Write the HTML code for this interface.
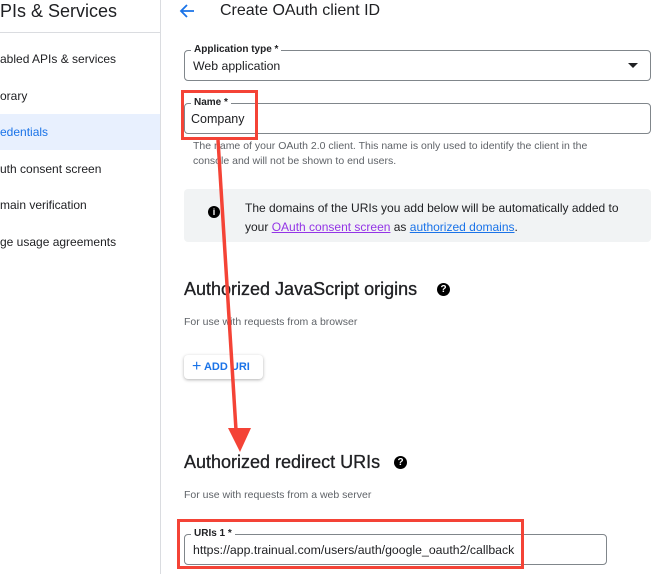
<!DOCTYPE html>
<html><head><style>
*{margin:0;padding:0;box-sizing:border-box}
body{width:666px;height:574px;background:#fff;font-family:"Liberation Sans",Arial,sans-serif;color:#202124;position:relative;overflow:hidden}
.a{position:absolute;white-space:nowrap}
.side{position:absolute;left:0;top:0;width:161px;height:574px;border-right:1px solid #dadce0}
.field{position:absolute;border:1px solid #80868b;border-radius:4px;background:#fff}
.lab{position:absolute;top:-7px;left:6px;background:#fff;padding:0 3px;font-size:10px;font-weight:bold;color:#202124}
.red{position:absolute;border:3px solid #f44336}
</style></head><body>
<div class="side">
<div class="a" style="left:0;top:1px;font-size:18px">PIs &amp; Services</div>
<div style="position:absolute;left:0;top:32px;width:161px;border-top:1px solid #dadce0"></div>
<div class="a" style="left:0;top:52px;font-size:12px">abled APIs &amp; services</div>
<div class="a" style="left:0;top:89px;font-size:12px">orary</div>
<div style="position:absolute;left:0;top:114px;width:160px;height:36px;background:#e8f0fe"></div>
<div class="a" style="left:0;top:125px;font-size:12px;color:#1a73e8">edentials</div>
<div class="a" style="left:0;top:162px;font-size:12px">uth consent screen</div>
<div class="a" style="left:0;top:198px;font-size:12px">main verification</div>
<div class="a" style="left:0;top:235px;font-size:12px">ge usage agreements</div>
</div>
<svg class="a" style="left:178px;top:3px" width="18" height="16" viewBox="0 0 18 16"><path d="M16 8H3M9 2L3 8l6 6" stroke="#1a73e8" stroke-width="1.8" fill="none"/></svg>
<div class="a" style="left:220px;top:2px;font-size:16px">Create OAuth client ID</div>
<div class="field" style="left:184px;top:50px;width:467px;height:31px"><div class="lab">Application type *</div>
<div class="a" style="left:8px;top:8px;font-size:12.3px">Web application</div>
<div class="a" style="right:12px;top:12px;width:0;height:0;border-left:5px solid transparent;border-right:5px solid transparent;border-top:5px solid #202124"></div></div>
<div class="field" style="left:184px;top:103px;width:467px;height:31px"><div class="lab">Name *</div>
<div class="a" style="left:6px;top:8px;font-size:12.5px">Company</div></div>
<div class="a" style="left:193px;top:139px;font-size:10.5px;color:#5f6368;line-height:15px">The name of your OAuth 2.0 client. This name is only used to identify the client in the<br>console and will not be shown to end users.</div>
<div style="position:absolute;left:184px;top:189px;width:467px;height:53px;background:#f1f3f4;border-radius:4px"></div>
<div class="a" style="left:208px;top:206px;width:12px;height:12px;border-radius:50%;background:#000;color:#fff;font-size:9px;font-weight:bold;text-align:center;line-height:12px">i</div>
<div class="a" style="left:245px;top:199px;font-size:12px;line-height:19px">The domains of the URIs you add below will be automatically added to<br>your <span style="color:#9334e6;text-decoration:underline">OAuth consent screen</span> as <span style="color:#1a73e8;text-decoration:underline">authorized domains</span>.</div>
<div class="a" style="left:184px;top:279px;font-size:18px;-webkit-text-stroke:0.3px #202124">Authorized JavaScript origins</div>
<div class="a" style="left:437px;top:283px;width:13px;height:13px;border-radius:50%;background:#000;color:#fff;font-size:10px;font-weight:bold;text-align:center;line-height:13px">?</div>
<div class="a" style="left:184px;top:316px;font-size:10.5px;color:#5f6368">For use with requests from a browser</div>
<div class="a" style="left:184px;top:355px;width:79px;height:24px;border-radius:4px;box-shadow:0 1px 3px rgba(0,0,0,.3);background:#fff;color:#1a73e8;font-size:11px;font-weight:bold;line-height:24px;padding-left:8px"><span style="font-size:16px;font-weight:normal;vertical-align:-1px">+</span> ADD URI</div>
<div class="a" style="left:184px;top:452px;font-size:18px;-webkit-text-stroke:0.3px #202124">Authorized redirect URIs</div>
<div class="a" style="left:394px;top:456px;width:13px;height:13px;border-radius:50%;background:#000;color:#fff;font-size:10px;font-weight:bold;text-align:center;line-height:13px">?</div>
<div class="a" style="left:184px;top:489px;font-size:10.5px;color:#5f6368">For use with requests from a web server</div>
<div class="field" style="left:184px;top:534px;width:423px;height:31px"><div class="lab">URIs 1 *</div>
<div class="a" style="left:8px;top:8px;font-size:12.3px">https://app.trainual.com/users/auth/google_oauth2/callback</div></div>
<div class="red" style="left:181px;top:90px;width:77px;height:50px"></div>
<div class="red" style="left:177px;top:519px;width:347px;height:50px"></div>
<svg class="a" style="left:0;top:0" width="666" height="574"><path d="M218 140L236 430" stroke="#f44336" stroke-width="3.5"/><path d="M228 428L251 428L240 452Z" fill="#f44336"/></svg>
</body></html>
